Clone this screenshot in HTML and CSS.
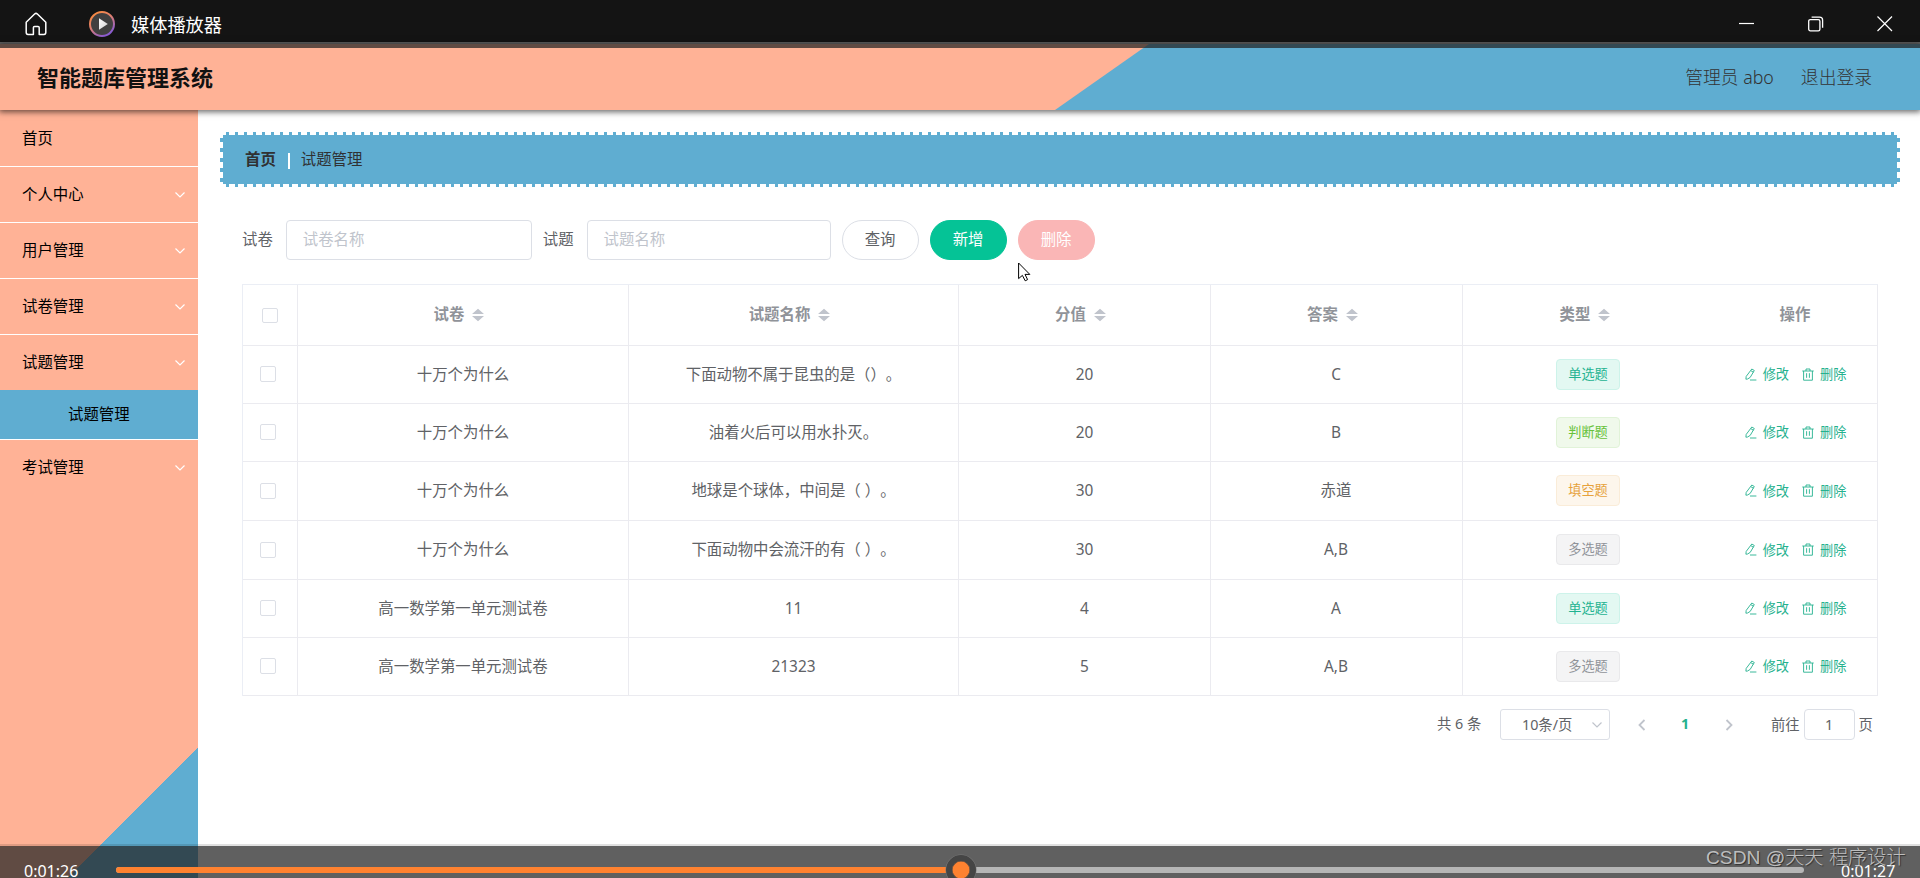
FILE: index.html
```html
<!DOCTYPE html>
<html lang="zh-CN">
<head>
<meta charset="utf-8">
<title>智能题库管理系统</title>
<link rel="stylesheet" href="styles.css">
</head>
<body>
<svg class="defs" aria-hidden="true">
  <symbol id="i-down" viewBox="0 0 12 12"><path d="M1.5 3.5 6 8 10.5 3.5" fill="none" stroke="currentColor" stroke-width="1.2"/></symbol>
  <symbol id="i-edit" viewBox="0 0 12 13"><path d="M6.8 1 9.3 2.5 5.2 9.4 2.6 11 .9 11.2 1.2 8.4ZM5.9 2.7 8.4 4.2M5 12H11.4" fill="none" stroke="currentColor" stroke-width=".9"/></symbol>
  <symbol id="i-trash" viewBox="0 0 12 13"><path d="M.3 3H11.7M4 3V1H8V3M1.6 3V12.2H10.4V3M4.6 5.2V9.8M7.4 5.2V9.8" fill="none" stroke="currentColor" stroke-width=".9"/></symbol>
  <symbol id="i-sort" viewBox="0 0 12 14"><path d="M0 6 6 .8 12 6ZM0 8H12L6 13.2Z" fill="#c0c4cc"/></symbol>
</svg>

<header class="titlebar">
  <svg class="home" viewBox="0 0 24 24"><path d="M2.2 10.2 10.6 2Q12 .8 13.4 2L21.8 10.2V20.6Q21.8 22.4 20 22.4H15.2V15.6Q15.2 14.4 14 14.4H10.6Q9.4 14.4 9.4 15.6V22.4H4Q2.2 22.4 2.2 20.6Z" fill="none" stroke="#fff" stroke-width="1.5" stroke-linejoin="round"/></svg>
  <svg class="play" viewBox="0 0 26 26">
    <defs>
      <linearGradient id="ring" x1="0" y1="0" x2=".6" y2="1"><stop offset="0" stop-color="#ff8c32"/><stop offset=".5" stop-color="#e08070"/><stop offset="1" stop-color="#8a5cd0"/></linearGradient>
      <linearGradient id="tri" x1="0" y1="0" x2="1" y2="1"><stop offset="0" stop-color="#fff"/><stop offset="1" stop-color="#cfcfcf"/></linearGradient>
    </defs>
    <circle cx="13" cy="13" r="12" fill="#404040" stroke="url(#ring)" stroke-width="2"/>
    <path d="M10 7.2 18.8 13 10 18.8Z" fill="url(#tri)"/>
  </svg>
  <span class="app-name">媒体播放器</span>
  <div class="win-buttons">
    <svg viewBox="0 0 16 16"><path d="M0 7.5H15" stroke="#fff" stroke-width="1.2"/></svg>
    <svg viewBox="0 0 16 16"><rect x=".7" y="3.6" width="11.2" height="11.2" rx="1.6" fill="none" stroke="#fff" stroke-width="1.3"/><path d="M3.6 1.1H11.6Q14.6 1.1 14.6 4V11.8" fill="none" stroke="#fff" stroke-width="1.3"/></svg>
    <svg viewBox="0 0 16 16"><path d="M.5.5 15 15M15 .5.5 15" stroke="#fff" stroke-width="1.2"/></svg>
  </div>
</header>

<div class="topbar">
  <h1 class="brand">智能题库管理系统</h1>
  <div class="user"><span>管理员 abo</span><span class="logout">退出登录</span></div>
</div>

<div class="layout">
  <nav class="side">
    <div class="item"><span>首页</span></div>
    <div class="item"><span>个人中心</span><svg><use href="#i-down"/></svg></div>
    <div class="item"><span>用户管理</span><svg><use href="#i-down"/></svg></div>
    <div class="item"><span>试卷管理</span><svg><use href="#i-down"/></svg></div>
    <div class="item open"><span>试题管理</span><svg><use href="#i-down"/></svg></div>
    <div class="sub">试题管理</div>
    <div class="item last"><span>考试管理</span><svg><use href="#i-down"/></svg></div>
  </nav>

  <main class="main">
    <div class="crumb"><b>首页</b><i></i><span>试题管理</span></div>

    <div class="filters">
      <label>试卷</label><div class="input first">试卷名称</div>
      <label class="second">试题</label><div class="input">试题名称</div>
      <button class="btn">查询</button>
      <button class="btn add">新增</button>
      <button class="btn del">删除</button>
    </div>

    <table class="grid">
      <colgroup><col class="c-check"><col class="c-paper"><col class="c-name"><col class="c-mid"><col class="c-mid"><col class="c-mid"><col class="c-ops"></colgroup>
      <thead>
        <tr>
          <th><span class="box head"></span></th>
          <th>试卷<svg class="sort"><use href="#i-sort"/></svg></th>
          <th>试题名称<svg class="sort"><use href="#i-sort"/></svg></th>
          <th>分值<svg class="sort"><use href="#i-sort"/></svg></th>
          <th>答案<svg class="sort"><use href="#i-sort"/></svg></th>
          <th>类型<svg class="sort"><use href="#i-sort"/></svg></th>
          <th>操作</th>
        </tr>
      </thead>
      <tbody>
        <tr><td><span class="box"></span></td><td>十万个为什么</td><td>下面动物不属于昆虫的是（）。</td><td>20</td><td>C</td><td><span class="tag single">单选题</span></td><td><div class="ops"><svg><use href="#i-edit"/></svg><span>修改</span><svg><use href="#i-trash"/></svg><span>删除</span></div></td></tr>
        <tr><td><span class="box"></span></td><td>十万个为什么</td><td>油着火后可以用水扑灭。</td><td>20</td><td>B</td><td><span class="tag judge">判断题</span></td><td><div class="ops"><svg><use href="#i-edit"/></svg><span>修改</span><svg><use href="#i-trash"/></svg><span>删除</span></div></td></tr>
        <tr class="tall"><td><span class="box"></span></td><td>十万个为什么</td><td>地球是个球体，中间是（ ）。</td><td>30</td><td>赤道</td><td><span class="tag blank">填空题</span></td><td><div class="ops"><svg><use href="#i-edit"/></svg><span>修改</span><svg><use href="#i-trash"/></svg><span>删除</span></div></td></tr>
        <tr class="tall"><td><span class="box"></span></td><td>十万个为什么</td><td>下面动物中会流汗的有（ ）。</td><td>30</td><td>A,B</td><td><span class="tag multi">多选题</span></td><td><div class="ops"><svg><use href="#i-edit"/></svg><span>修改</span><svg><use href="#i-trash"/></svg><span>删除</span></div></td></tr>
        <tr><td><span class="box"></span></td><td>高一数学第一单元测试卷</td><td>11</td><td>4</td><td>A</td><td><span class="tag single">单选题</span></td><td><div class="ops"><svg><use href="#i-edit"/></svg><span>修改</span><svg><use href="#i-trash"/></svg><span>删除</span></div></td></tr>
        <tr><td><span class="box"></span></td><td>高一数学第一单元测试卷</td><td>21323</td><td>5</td><td>A,B</td><td><span class="tag multi">多选题</span></td><td><div class="ops"><svg><use href="#i-edit"/></svg><span>修改</span><svg><use href="#i-trash"/></svg><span>删除</span></div></td></tr>
      </tbody>
    </table>

    <div class="pager">
      <span class="total">共 6 条</span>
      <div class="size"><span>10条/页</span><svg viewBox="0 0 12 12"><use href="#i-down"/></svg></div>
      <svg class="arrow" viewBox="0 0 8 12"><path d="M6.5 1 1.5 6 6.5 11" fill="none" stroke="#c0c4cc" stroke-width="1.8"/></svg>
      <b class="page">1</b>
      <svg class="arrow" viewBox="0 0 8 12"><path d="M1.5 1 6.5 6 1.5 11" fill="none" stroke="#c0c4cc" stroke-width="1.8"/></svg>
      <span class="goto">前往</span><div class="jump">1</div><span>页</span>
    </div>
  </main>
</div>

<svg class="cursor" viewBox="0 0 13 20"><path d="M.6 1V16.6L4.4 13.4 7.2 18.8 9.6 17.6 7 12.4H11.8Z" fill="#fff" stroke="#000" stroke-width="1"/></svg>

<div class="player">
  <span class="time">0:01:26</span>
  <div class="track"><div class="played"></div><div class="thumb"></div></div>
  <span class="time end">0:01:27</span>
</div>
<div class="watermark">CSDN @天天 程序设计</div>
</body>
</html>
```
FILE: styles.css
```css
* { box-sizing: border-box; }
body {
  margin: 0;
  height: 878px;
  position: relative;
  overflow: hidden;
  display: flex;
  flex-direction: column;
  background: #fff;
  color: #606266;
  font: 15.4px/20px "Noto Sans", "Noto Sans CJK SC", sans-serif;
  text-spacing-trim: space-all;
}
svg { display: block; flex: none; }
.defs { position: absolute; width: 0; height: 0; }

.titlebar {
  height: 44px;
  flex: none;
  display: flex;
  align-items: center;
  padding: 5px 14px 0 24px;
  background: #141414;
  border-bottom: 2px solid #636363;
  color: #fff;
}
.home { width: 24px; height: 24px; }
.play { width: 26px; height: 26px; margin-left: 41px; }
.app-name { margin-left: 16px; padding-top: 2px; font-size: 18.2px; }
.win-buttons { margin-left: auto; display: flex; gap: 53px; padding-right: 13px; }
.win-buttons svg { width: 16px; height: 16px; }

.topbar {
  height: 66px;
  flex: none;
  position: relative;
  z-index: 1;
  display: flex;
  align-items: center;
  justify-content: space-between;
  padding: 0 48px 0 37px;
  background: #5fadd1;
  box-shadow: 0 1px 6px 1px rgba(0, 0, 0, .6);
}
/* salmon wedge on the left part of the bar */
.topbar::before {
  content: "";
  position: absolute;
  inset: 0;
  background: #ffb296;
  clip-path: polygon(0 0, 1149px 0, 1055px 100%, 0 100%);
}
.topbar::after {
  content: "";
  position: absolute;
  inset: 0 0 auto;
  height: 4px;
  background: rgba(34, 34, 34, .72);
}
.brand { position: relative; margin: 0; font-size: 22px; line-height: 30px; color: #111; }
.user { display: flex; gap: 27px; font-size: 17.8px; font-weight: 300; color: #333; }

.layout { flex: 1; display: flex; min-height: 0; }
.side {
  width: 198px;
  flex: none;
  color: #000;
  background: linear-gradient(to bottom right, transparent 50%, #5fadd1 50.2%) right bottom / 131px 131px no-repeat, #ffb296;
}
.item {
  height: 56px;
  display: flex;
  align-items: center;
  justify-content: space-between;
  padding: 0 12px 0 22px;
  border-bottom: 1px solid #fff;
}
.item:first-child { height: 57px; padding-top: 1px; }
.item.open, .item.last { border-bottom: 0; }
.item.open { height: 55px; }
.item svg { width: 12px; height: 12px; color: #fff; }
.sub {
  height: 50px;
  display: flex;
  align-items: center;
  padding-left: 68px;
  background: #5fadd1;
  border-bottom: 1px solid #fff;
}

.main { flex: 1; padding: 22px 20px 0 22px; display: flex; flex-direction: column; }
/* square-toothed edge around the bar */
.crumb {
  height: 55px;
  flex: none;
  display: flex;
  align-items: center;
  padding: 0 26px 0 25px;
  color: #303133;
  background:
    linear-gradient(#5fadd1 0 0) 3px 3px / calc(100% - 6px) calc(100% - 6px) no-repeat,
    repeating-linear-gradient(90deg, transparent 0 6px, #5fadd1 6px 9px) 0 0 / 100% 3px no-repeat,
    repeating-linear-gradient(90deg, transparent 0 6px, #5fadd1 6px 9px) 0 100% / 100% 3px no-repeat,
    repeating-linear-gradient(transparent 0 6px, #5fadd1 6px 10px) 0 0 / 3px 52px no-repeat,
    repeating-linear-gradient(transparent 0 6px, #5fadd1 6px 10px) 100% 0 / 3px 52px no-repeat;
}
.crumb i { width: 2px; height: 16px; margin: 2px 11px 0 12px; background: #fff; }

.filters { display: flex; align-items: center; margin: 33px 0 24px 22px; height: 40px; }
.input {
  width: 244px;
  height: 40px;
  margin-left: 13px;
  padding: 0 16px;
  line-height: 38px;
  border: 1px solid #dcdfe6;
  border-radius: 4px;
  color: #c0c4cc;
}
.input.first { width: 246px; }
.second { margin-left: 11px; }
.btn {
  width: 77px;
  height: 40px;
  margin-left: 11px;
  padding: 0;
  border: 1px solid #dcdfe6;
  border-radius: 20px;
  background: #fff;
  color: #606266;
  font: inherit;
}
.btn.add { background: #05c396; border-color: #05c396; color: #fff; }
.btn.del { background: #fab6b6; border-color: #fab6b6; color: #fff; }

.grid {
  width: 1636px;
  margin-left: 22px;
  flex: none;
  table-layout: fixed;
  border-spacing: 0;
  border: 1px solid #ebeef5;
  border-width: 1px 0 0 1px;
}
.c-check { width: 55px; }
.c-paper { width: 331px; }
.c-name { width: 330px; }
.c-mid { width: 252px; }
.c-ops { width: 163px; }
th, td {
  height: 58px;
  padding: 0;
  text-align: center;
  vertical-align: middle;
  border: 0 solid #ebebf0;
  border-width: 0 1px 1px 0;
}
th { height: 61px; padding: 0 8px 1px 0; color: #909399; }
th:first-child { padding: 0; }
th:last-child { padding: 0 2px 0 0; }
.tall td { height: 59px; }
td:nth-child(n+5) { padding-right: 1px; }
th:nth-child(6), td:nth-child(6) { border-right: 0; }
td:nth-child(6) { padding: 0 2px 1px 0; }
td:last-child { padding-bottom: 1px; }
.sort { display: inline-block; width: 12px; height: 14px; margin-left: 8px; vertical-align: -2px; }
.box {
  display: block;
  width: 16px;
  height: 16px;
  margin: 0 auto 0 17px;
  border: 1px solid #dcdfe6;
  border-radius: 2px;
}
.box.head { margin-left: 19px; height: 15px; }
td .box { position: relative; top: -.5px; }
.tag {
  display: block;
  width: 64px;
  height: 31px;
  margin: 0 auto;
  border: 1px solid;
  border-radius: 4px;
  font-size: 13.2px;
  line-height: 29px;
}
.single { color: #1fb391; background: #e3f8f2; border-color: #cdf3ea; }
.judge { color: #67c23a; background: #f0f9eb; border-color: #e1f3d8; }
.blank { color: #e6a23c; background: #fdf6ec; border-color: #faecd8; }
.multi { color: #909399; background: #f4f4f5; border-color: #e9e9eb; }
.ops { display: flex; align-items: center; justify-content: center; color: #25b18e; font-size: 13.2px; }
.ops svg { width: 12px; height: 13px; }
.ops span { margin: 0 13px 0 6px; }
.ops span:last-child { margin-right: 0; }

.pager { display: flex; align-items: center; margin-top: 13px; height: 31px; padding-left: 1217px; font-size: 14.3px; }
.total { width: 46px; white-space: nowrap; padding-bottom: 1px; }
.size {
  width: 110px;
  height: 31px;
  margin-left: 17px;
  padding: 0 6px 0 21px;
  display: flex;
  align-items: center;
  justify-content: space-between;
  border: 1px solid #dcdfe6;
  border-radius: 3px;
}
.size svg { width: 12px; height: 12px; color: #c0c4cc; }
.arrow { width: 8px; height: 12px; margin-left: 28px; }
.page { width: 9px; margin: 0 7px 2px 35px; color: #25b18e; }
.goto { margin-left: 38px; }
.jump {
  width: 51px;
  height: 31px;
  margin: 0 4px;
  line-height: 29px;
  text-align: center;
  border: 1px solid #dcdfe6;
  border-radius: 4px;
}

.cursor { position: absolute; left: 1018px; top: 262px; width: 13px; height: 20px; }

.player {
  position: absolute;
  inset: 844px 0 auto;
  height: 52px;
  display: flex;
  align-items: center;
  padding: 0 24px 1px;
  background: rgba(34, 34, 34, .72);
  background-clip: padding-box;
  border-top: 2px solid rgba(0, 0, 0, .12);
  color: #fff;
  font-size: 16px;
}
.time { width: 54px; }
.track { position: relative; width: 1688px; height: 6px; margin: 0 37px 2px 38px; border-radius: 3px; background: #b6b6b6; }
.played { width: 50%; height: 6px; border-radius: 3px; background: #ff8230; }
.thumb {
  position: absolute;
  left: 830px;
  top: -12px;
  width: 30px;
  height: 30px;
  border: 6px solid #454545;
  border-radius: 50%;
  background: #ff8230;
  box-shadow: inset 0 0 0 .5px #454545, 0 0 0 .5px #777;
}
.watermark {
  position: absolute;
  left: 1706px;
  top: 845px;
  font-size: 19.2px;
  line-height: 26px;
  font-family: "Liberation Sans", "Noto Sans CJK SC", sans-serif;
  font-weight: 300;
  white-space: nowrap;
  color: rgba(205, 205, 205, .9);
  text-shadow: 1px 1px 1px rgba(0, 0, 0, .5);
}
```
